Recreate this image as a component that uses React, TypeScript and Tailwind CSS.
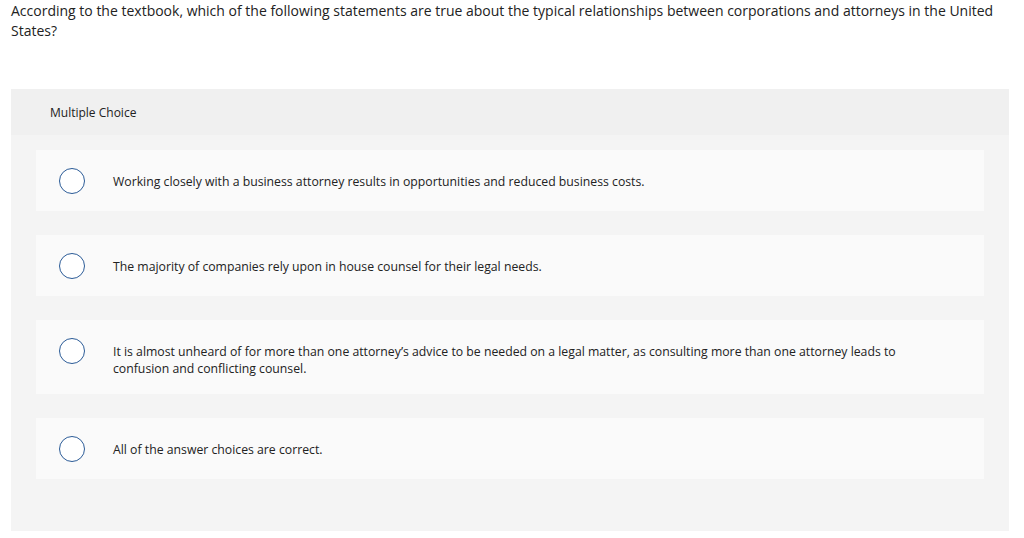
const options = [
  'Working closely with a business attorney results in opportunities and reduced business costs.',
  'The majority of companies rely upon in house counsel for their legal needs.',
  'It is almost unheard of for more than one attorney\u2019s advice to be needed on a legal matter, as consulting more than one attorney leads to confusion and conflicting counsel.',
  'All of the answer choices are correct.',
]

export default function App() {
  return (
    <div className="min-h-[538px] bg-white text-[#222] font-['Open_Sans',sans-serif]">
      {/* Question */}
      <p className="px-[11px] pt-[1px] text-[14px] leading-[20px] text-[#222]">
        According to the textbook, which of the following statements are true about the typical relationships between corporations and attorneys in the United States?
      </p>

      <div className="mt-[48px] ml-[11px] w-[998px] bg-[#f4f4f4] pb-[52px]">
        <div className="h-[46px] bg-[#f0f0f0] flex items-center pl-[39px] pt-[2px] text-[12px] text-[#222]">
          Multiple Choice
        </div>

        <div className="flex flex-col gap-[24px] pt-[15px] px-[25px]">
          {options.map((text) => (
            <div key={text} className="flex items-start bg-[#fafafa] pl-[23px] pr-[60px] pt-[18px] pb-[17px]">
              <span className="shrink-0 w-[26px] h-[26px] rounded-full border-[1.5px] border-[#2b5b97] bg-white" />
              <span className="ml-[28px] pt-[5px] text-[12.25px] leading-[17px] text-[#222]">{text}</span>
            </div>
          ))}
        </div>
      </div>
    </div>
  )
}
